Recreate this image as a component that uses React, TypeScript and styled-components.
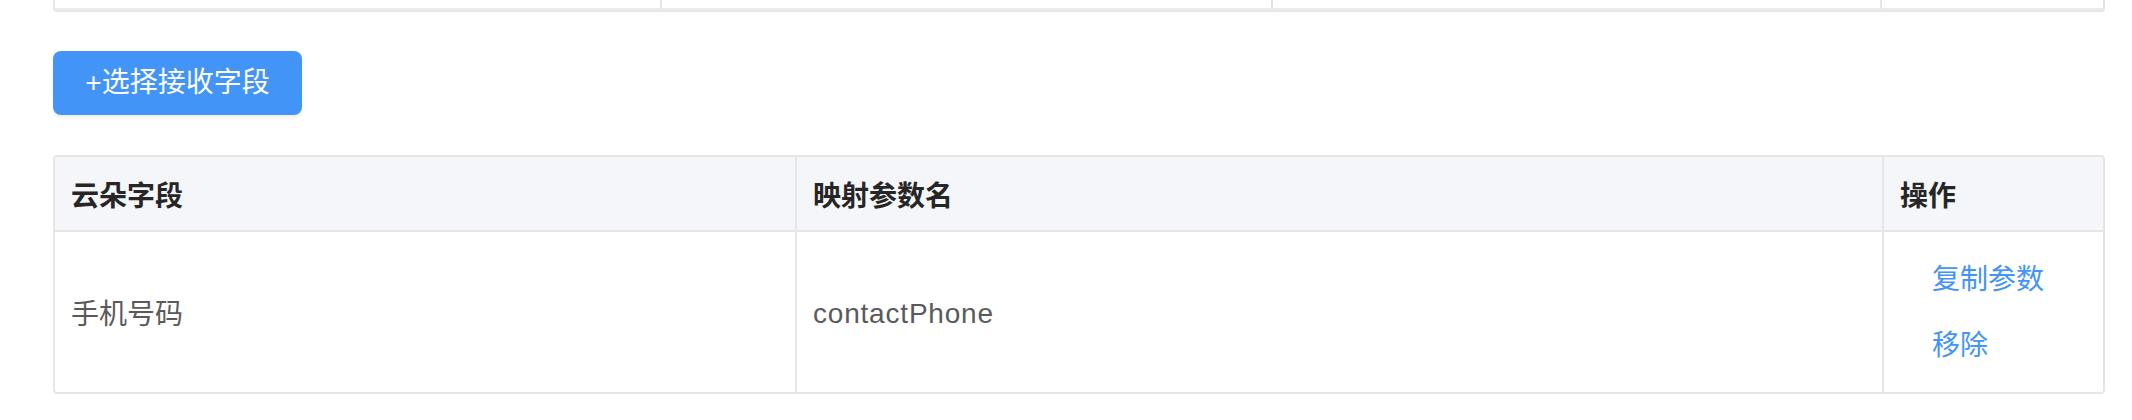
import React from 'react';
import styled, { createGlobalStyle } from 'styled-components';

const GlobalStyle = createGlobalStyle`
  html, body {
    margin: 0;
    padding: 0;
    background: #fff;
  }
  body {
    font-family: "Liberation Sans", "Noto Sans CJK SC", sans-serif;
  }
`;

// Page wrapper
const Page = styled.div`
  width: 2132px;
  height: 420px;
  box-sizing: border-box;
  padding: 0 27px 0 53px;
  display: flex;
  flex-direction: column;
  align-items: flex-start;
`;

// Bottom edge of the previous table, scrolled mostly out of view
const PrevTableTail = styled.div`
  width: 100%;
  height: 12px;
  box-sizing: border-box;
  border: 2px solid #e6e6e6;
  border-top: none;
  border-radius: 0 0 4px 4px;
  display: grid;
  grid-template-columns: 607px 611px 609px 1fr;
`;

const TailCell = styled.div<{ $last?: boolean }>`
  border-right: ${(p) => (p.$last ? 'none' : '2px solid #e6e6e6')};
  border-bottom: 2px solid #ececec;
`;

const PrimaryButton = styled.button`
  margin-top: 39px;
  width: 249px;
  height: 64px;
  border: none;
  border-radius: 8px;
  background: #4294f6;
  color: #fff;
  font-family: "Liberation Sans", "Noto Sans CJK SC", sans-serif;
  font-size: 28px;
  line-height: 1;
  box-shadow: 0 3px 3px rgba(0, 0, 0, 0.06);
  cursor: pointer;
  padding: 0;
`;

const Table = styled.div`
  margin-top: 40px;
  width: 100%;
  box-sizing: border-box;
  border: 2px solid #e6e6e6;
  border-radius: 4px;
  display: grid;
  grid-template-columns: 742px 1087px 1fr;
  overflow: hidden;
`;

const HeadCell = styled.div<{ $last?: boolean }>`
  height: 75px;
  box-sizing: border-box;
  background: #f5f6f9;
  border-bottom: 2px solid #e6e6e6;
  border-right: ${(p) => (p.$last ? 'none' : '2px solid #e6e6e6')};
  padding: 0 16px;
  display: flex;
  align-items: center;
  font-size: 28px;
  font-weight: bold;
  color: #262626;
`;

const BodyCell = styled.div<{ $last?: boolean; $latin?: boolean }>`
  height: 160px;
  box-sizing: border-box;
  border-right: ${(p) => (p.$last ? 'none' : '2px solid #e6e6e6')};
  padding: ${(p) => (p.$latin ? '3px 16px 0' : '0 16px')};
  display: flex;
  align-items: center;
  font-size: 28px;
  letter-spacing: ${(p) => (p.$latin ? '0.8px' : 'normal')};
  color: #5a5a5a;
`;

const ActionList = styled.div`
  display: flex;
  flex-direction: column;
  align-items: flex-start;
  gap: 26px;
  padding: 2px 0 0 32px;
`;

const LinkButton = styled.span`
  color: #4294f6;
  font-size: 28px;
  line-height: 40px;
  cursor: pointer;
`;

const columns = ['云朵字段', '映射参数名', '操作'];
const rows = [{ field: '手机号码', param: 'contactPhone' }];

export default function App() {
  return (
    <>
      <GlobalStyle />
      <Page>
        <PrevTableTail>
          <TailCell />
          <TailCell />
          <TailCell />
          <TailCell $last />
        </PrevTableTail>

        <PrimaryButton>+选择接收字段</PrimaryButton>

        <Table>
          {columns.map((col, i) => (
            <HeadCell key={col} $last={i === columns.length - 1}>
              {col}
            </HeadCell>
          ))}
          {rows.map((row) => (
            <React.Fragment key={row.param}>
              <BodyCell>{row.field}</BodyCell>
              <BodyCell $latin>{row.param}</BodyCell>
              <BodyCell $last>
                <ActionList>
                  <LinkButton>复制参数</LinkButton>
                  <LinkButton>移除</LinkButton>
                </ActionList>
              </BodyCell>
            </React.Fragment>
          ))}
        </Table>
      </Page>
    </>
  );
}
